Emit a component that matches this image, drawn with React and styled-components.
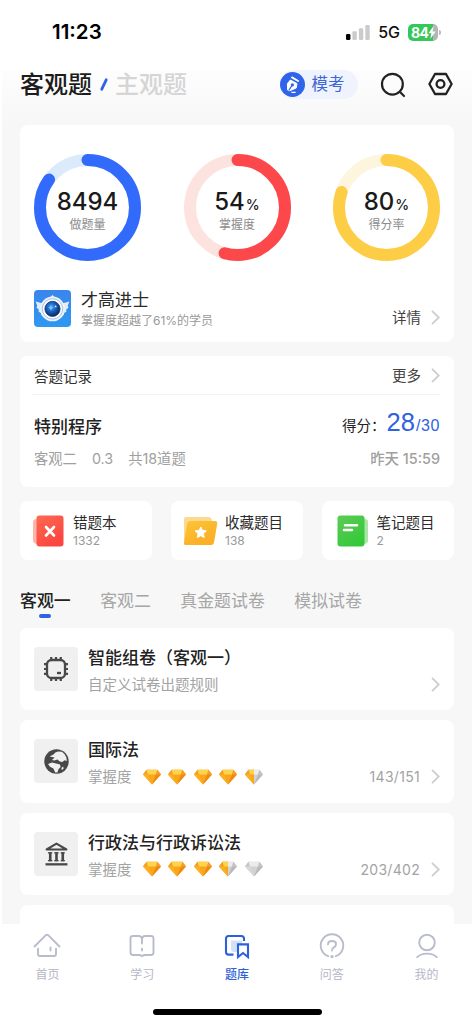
import React from "react";
import styled, { createGlobalStyle } from "styled-components";

const GlobalStyle = createGlobalStyle`
    * {
        box-sizing: border-box;
    }

    body {
        margin: 0;
        background: #fff;
        font-family: "Inter", "Noto Sans CJK SC", sans-serif;
        color: #222;
    }
`;

const Page = styled.div`
    width: 474px;
    height: 1025px;
    display: flex;
    flex-direction: column;
    overflow: hidden;
    background: #fff;
`;

const StatusBar = styled.div`
    height: 70px;
    flex-shrink: 0;
    display: flex;
    justify-content: space-between;
    align-items: flex-start;
    padding: 20px 33px 0 52px;
`;

const Clock = styled.span`
    font-size: 20.5px;
    line-height: 24px;
    font-weight: 600;
    color: #000;
`;

const StatusIcons = styled.div`
    height: 24px;
    display: flex;
    align-items: center;
`;

const Network = styled.span`
    font-size: 16px;
    font-weight: 500;
    color: #111;
    margin: 0 8px 0 8px;
`;

const Battery = styled.span`
    width: 30px;
    height: 17px;
    display: flex;
    align-items: center;
    padding-left: 3px;
    border-radius: 5px;
    background: linear-gradient(90deg, #34c759 84%, #b5b5b5 84%);
    color: #fff;
    font-size: 14px;
    line-height: 17px;
    font-weight: 700;
    letter-spacing: -0.6px;
`;

const BatteryTip = styled.span`
    width: 2px;
    height: 5px;
    margin-left: 1px;
    border-radius: 0 2px 2px 0;
    background: #bbb;
`;

const Content = styled.div`
    flex: 1;
    min-height: 0;
    display: flex;
    flex-direction: column;
    margin: 0 2px;
    padding: 0 18px;
    overflow: hidden;
    background: linear-gradient(#fdfdfd, #f7f7f7 56px);
`;

const Header = styled.div`
    height: 55px;
    flex-shrink: 0;
    display: flex;
    align-items: flex-start;
    justify-content: space-between;
    padding-right: 1.5px;
`;

const Titles = styled.div`
    height: 28px;
    display: flex;
    align-items: center;
`;

const Title = styled.span`
    padding-top: 2px;
    font-size: 24px;
    line-height: 28px;
    font-weight: 500;
    color: ${({ muted }) => (muted ? "#d5d5d5" : "#1c1c1c")};
`;

const Slash = styled.svg`
    margin: 0 7px 0 8px;
`;

const Actions = styled.div`
    height: 28px;
    display: flex;
    align-items: center;
`;

const MockButton = styled.div`
    width: 78px;
    height: 29px;
    display: flex;
    align-items: center;
    gap: 7px;
    margin-right: 22px;
    border-radius: 15px;
    background: #eff3fe;
    color: #3d66d4;
    font-size: 16.5px;
    line-height: 28px;
`;

const SearchIcon = styled.svg`
    margin: 2px 22px 0 0;
`;

const Card = styled.div`
    flex-shrink: 0;
    border-radius: 8px;
    background: #fff;
`;

const StatsCard = styled(Card)`
    height: 217px;
    padding: 29px 14px 0;
    margin-bottom: 14px;
`;

const Rings = styled.div`
    display: flex;
    justify-content: space-between;
    margin-bottom: 29px;
`;

const Ring = styled.div`
    width: 107px;
    height: 107px;
    display: grid;

    > * {
        grid-area: 1 / 1;
    }
`;

const RingText = styled.div`
    display: flex;
    flex-direction: column;
    align-items: center;
    padding-top: 33px;
`;

const RingValue = styled.div`
    height: 28px;
    font-size: 24px;
    line-height: 29px;
    font-weight: 500;
    color: #1a1a1a;

    small {
        margin-left: 1px;
        font-size: 14px;
        line-height: 1;
    }
`;

const RingLabel = styled.div`
    padding-top: 1px;
    font-size: 12px;
    line-height: 18px;
    color: #8c8c8c;
`;

const UserRow = styled.div`
    height: 37px;
    display: flex;
    align-items: center;
`;

const UserText = styled.div`
    flex: 1;
    margin-left: 10px;
    padding-top: 4px;
`;

const UserName = styled.div`
    font-size: 17px;
    line-height: 20px;
    color: #2b2b2b;
`;

const UserNote = styled.div`
    font-size: 12px;
    line-height: 22px;
    color: #999;
`;

const Link = styled.div`
    display: flex;
    align-items: center;
    gap: 10px;
    padding-top: ${({ offset }) => offset || 0}px;
    font-size: 14.5px;
    line-height: 20px;
    color: #444;
`;

const LinkText = styled.span`
    padding-top: 1px;
`;

const RecordCard = styled(Card)`
    height: 131px;
    padding: 0 14px;
    margin-bottom: 14px;
`;

const RecordHeader = styled.div`
    height: 39px;
    display: flex;
    align-items: center;
    justify-content: space-between;
    margin-left: -2px;
    padding-left: 2px;
    border-bottom: 1px solid #f3f3f3;
    font-size: 14.5px;
    color: #333;
`;

const RecordRow = styled.div`
    display: flex;
    align-items: center;
    justify-content: space-between;
    height: ${({ height }) => height}px;
    margin-top: ${({ gap }) => gap}px;
`;

const RecordName = styled.span`
    padding-top: 2px;
    font-size: 17px;
    font-weight: 500;
    color: #222;
`;

const Score = styled.span`
    display: flex;
    align-items: baseline;
    padding-bottom: 4px;
    font-size: 14.5px;
    color: #222;

    b,
    i {
        font-family: "Liberation Sans", sans-serif;
        font-style: normal;
        font-weight: 400;
        color: #2f62e0;
    }

    b {
        margin-left: 1px;
        font-size: 25.5px;
    }

    i {
        margin-left: 1px;
        font-size: 16px;
        letter-spacing: 0.6px;
    }
`;

const RecordMeta = styled.span`
    display: flex;
    align-items: baseline;
    gap: 15px;
    padding-bottom: 1px;
    font-size: 14.3px;
    color: #a0a0a0;
`;

const RecordTime = styled.span`
    padding-bottom: 1px;
    font-size: 14.4px;
    font-weight: 500;
    color: #a0a0a0;
`;

const Tiles = styled.div`
    flex-shrink: 0;
    display: grid;
    grid-template-columns: repeat(3, 132px);
    justify-content: space-between;
    margin-bottom: 25px;
`;

const Tile = styled.div`
    height: 59px;
    display: flex;
    align-items: center;
    padding-left: ${({ inset }) => inset}px;
    border-radius: 8px;
    background: #fff;
`;

const TileText = styled.div`
    margin-left: ${({ gap }) => gap}px;
    font-size: 14.5px;
    line-height: 20px;
    color: #2b2b2b;

    small {
        display: block;
        font-size: 12px;
        line-height: 16px;
        color: #999;
    }
`;

const Tabs = styled.div`
    height: 43px;
    flex-shrink: 0;
    display: flex;
    gap: 29.5px;
`;

const Tab = styled.div`
    height: 33px;
    display: flex;
    flex-direction: column;
    align-items: center;
    font-size: 16.9px;
    line-height: 33px;
    font-weight: ${({ active }) => (active ? 500 : 400)};
    color: ${({ active }) => (active ? "#222" : "#a6a6a6")};

    &::after {
        content: "";
        width: 12px;
        height: 4px;
        margin-top: -4px;
        flex-shrink: 0;
        border-radius: 2px;
        background: ${({ active }) => (active ? "#2f62e6" : "transparent")};
    }
`;

const PaperCard = styled(Card)`
    height: 82.4px;
    display: flex;
    padding: 19px 14px 0;
    margin-bottom: 10px;
`;

const PaperIcon = styled.div`
    width: 44px;
    height: 44px;
    display: flex;
    align-items: center;
    justify-content: center;
    border-radius: 4px;
    background: #f0f0f0;
`;

const PaperBody = styled.div`
    flex: 1;
    margin-left: 10px;
`;

const PaperTitle = styled.div`
    height: 21px;
    font-size: 17px;
    line-height: 23px;
    font-weight: 500;
    color: #222;
`;

const PaperRow = styled.div`
    height: 25px;
    display: flex;
    align-items: center;
    margin-top: 4px;
    font-size: 14.5px;
    line-height: 25px;
    color: #a3a3a3;
`;

const Gems = styled.div`
    display: flex;
    gap: 7.5px;
    margin-left: 11px;
`;

const PaperCount = styled.div`
    display: flex;
    align-items: center;
    gap: 11px;
    margin-left: auto;
    font-size: 14px;
    letter-spacing: 0.3px;
`;

const TabBar = styled.div`
    height: 101px;
    flex-shrink: 0;
    display: flex;
    flex-direction: column;
    align-items: center;
    background: #fff;
`;

const NavItems = styled.div`
    width: 100%;
    height: 85px;
    display: flex;
`;

const NavItem = styled.div`
    flex: 1;
    display: flex;
    flex-direction: column;
    align-items: center;
    padding-top: 8px;
    font-size: 12px;
    line-height: 18px;
    font-weight: ${({ active }) => (active ? 500 : 400)};
    color: ${({ active }) => (active ? "#2f62d8" : "#b4b7c6")};

    svg {
        margin-bottom: 6px;
    }
`;

const HomeIndicator = styled.div`
    width: 169px;
    height: 6px;
    border-radius: 3px;
    background: #000;
`;

const rings = [
    { value: "8494", label: "做题量", percent: 85, color: "#326bfb", track: "#dcebfb" },
    { value: "54", unit: "%", label: "掌握度", percent: 54.4, color: "#fc484b", track: "#fde3e0" },
    { value: "80", unit: "%", label: "得分率", percent: 80.3, color: "#fccd45", track: "#fef5df" },
];

const navs = [
    { name: "首页", Icon: HomeIcon },
    { name: "学习", Icon: BookIcon },
    { name: "题库", Icon: BankIcon, active: true },
    { name: "问答", Icon: AskIcon },
    { name: "我的", Icon: MineIcon },
];

function Chevron() {
    return (
        <svg width="9" height="15" viewBox="0 0 9 15" fill="none" stroke="#cdcdcd" strokeWidth="1.8">
            <path d="M1 0.8L7.8 7.5L1 14.2" />
        </svg>
    );
}

function SignalIcon() {
    return (
        <svg width="24" height="15" viewBox="0 0 24 15" fill="#cbcbcb">
            <rect x="0" y="9" width="4.4" height="6" rx="1.3" fill="#000" />
            <rect x="6.4" y="6.2" width="4.4" height="8.8" rx="1.3" />
            <rect x="12.9" y="3.2" width="4.4" height="11.8" rx="1.3" />
            <rect x="19.3" y="0" width="4.4" height="15" rx="1.3" />
        </svg>
    );
}

function PenIcon() {
    return (
        <svg width="25" height="25" viewBox="0 0 25 25">
            <circle cx="12.5" cy="12.5" r="12.5" fill="#2f63ea" />
            <path d="M10.4 8L17 11.6L16.2 16L9.6 18.8L7.6 18L7.4 11.6Z" fill="#fff" stroke="#fff" strokeLinejoin="round" />
            <path d="M12 5.4L18.2 9" stroke="#fff" strokeWidth="1.8" strokeLinecap="round" />
            <path d="M8.8 18.4L12 13.4" stroke="#2f63ea" strokeWidth="1.1" />
            <circle cx="12.4" cy="12.8" r="1.6" fill="#2f63ea" />
            <path d="M11.4 20.4H15.6" stroke="#fff" strokeWidth="1.3" />
        </svg>
    );
}

function Avatar() {
    return (
        <svg width="37" height="37" viewBox="0 0 37 37">
            <defs>
                <linearGradient id="avatarBg" x1="0" y1="0" x2="0" y2="1">
                    <stop offset="0" stopColor="#3b84ec" />
                    <stop offset="1" stopColor="#2d99f2" />
                </linearGradient>
                <radialGradient id="lens" cx="0.42" cy="0.38" r="0.6">
                    <stop offset="0" stopColor="#48a4f4" />
                    <stop offset="0.55" stopColor="#155bb8" />
                    <stop offset="1" stopColor="#0c2d64" />
                </radialGradient>
            </defs>
            <rect width="37" height="37" rx="4" fill="url(#avatarBg)" />
            <path
                d="M1.6 11.5L11 14L10 26L7.6 25.2L7 23L4.6 21.8L4.8 19.6L2.6 17.8L3.2 15.6Z"
                fill="#e3edf8"
            />
            <path
                d="M35.4 11.5L26 14L27 26L29.4 25.2L30 23L32.4 21.8L32.2 19.6L34.4 17.8L33.8 15.6Z"
                fill="#e3edf8"
            />
            <path d="M16 7.5L18.5 5L21 7.5Z" fill="#e9f2fb" />
            <circle cx="18.5" cy="18.9" r="12.4" fill="#eaf2fb" />
            <circle cx="18.5" cy="18.9" r="10.2" fill="#fff" stroke="#8fb3dc" strokeWidth="0.8" />
            <circle cx="18.5" cy="18.9" r="7.6" fill="url(#lens)" stroke="#17386e" strokeWidth="0.8" />
            <path d="M16.8 15L17.8 17L19.8 17.6L18 18.6L17 20.6L16 18.6L14.2 17.6L16 17Z" fill="#7cc5fb" />
            <circle cx="21.6" cy="16.4" r="0.9" fill="#d9eefe" />
        </svg>
    );
}

function WrongIcon() {
    return (
        <svg width="32" height="32" viewBox="0 0 32 32">
            <defs>
                <linearGradient id="wrong" x1="0" y1="0" x2="0.6" y2="1">
                    <stop offset="0" stopColor="#fd6a50" />
                    <stop offset="1" stopColor="#fb4540" />
                </linearGradient>
            </defs>
            <path d="M7 3L2.5 4.6Q1 5.2 1 7V26Q1 27.6 2.6 28.2L7 30Z" fill="#fdb5a9" />
            <rect x="4.5" y="0.5" width="27" height="31" rx="3" fill="url(#wrong)" />
            <path d="M14 12L22 20.5M22 12L14 20.5" stroke="#fff" strokeWidth="2.6" strokeLinecap="round" />
        </svg>
    );
}

function FavoriteIcon() {
    return (
        <svg width="35" height="30" viewBox="0 0 35 30">
            <defs>
                <linearGradient id="favorite" x1="0" y1="0" x2="0.6" y2="1">
                    <stop offset="0" stopColor="#fcc536" />
                    <stop offset="1" stopColor="#fbae26" />
                </linearGradient>
            </defs>
            <path d="M3 1H25.5Q28.4 1 28.6 4V24H1V3Q1 1 3 1Z" fill="#fdd990" />
            <path
                d="M7 5H32Q34.8 5 34.2 8L31 26.4Q30.5 29 28 29H3Q0.6 29 1 26.4L4 7.5Q4.4 5 7 5Z"
                fill="url(#favorite)"
            />
            <path
                d="M17.8 11L19.5 14.4L23.3 14.9L20.5 17.6L21.2 21.5L17.8 19.7L14.3 21.5L15 17.6L12.2 14.9L16 14.4Z"
                fill="#fff"
                stroke="#fff"
                strokeLinejoin="round"
            />
        </svg>
    );
}

function NoteIcon() {
    return (
        <svg width="32" height="32" viewBox="0 0 32 32">
            <defs>
                <linearGradient id="note" x1="0" y1="0" x2="0.6" y2="1">
                    <stop offset="0" stopColor="#5ccb56" />
                    <stop offset="1" stopColor="#35c93a" />
                </linearGradient>
            </defs>
            <path d="M25 3L29.6 4.4Q31 5 31 6.6V26Q31 27.6 29.6 28.2L25 30Z" fill="#a8e5a6" />
            <rect x="0.5" y="0.5" width="27" height="31" rx="3" fill="url(#note)" />
            <path d="M8 10.2H20M7 15H15" stroke="#fff" strokeWidth="2.5" strokeLinecap="round" />
        </svg>
    );
}

function ChipIcon() {
    return (
        <svg width="26" height="26" viewBox="0 0 26 26" fill="none" stroke="#484848" strokeWidth="2.3">
            <rect x="4" y="4" width="18" height="18" rx="4.5" />
            <path
                d="M8.2 1V4M13 1V4M17.8 1V4M8.2 22V25M13 22V25M17.8 22V25M1 8.2H4M1 13H4M1 17.8H4M22 8.2H25M22 13H25M22 17.8H25"
                strokeWidth="2.2"
            />
            <path d="M14 17H18" strokeWidth="2.4" />
        </svg>
    );
}

function EarthIcon() {
    return (
        <svg width="25" height="25" viewBox="0 0 25 25">
            <circle cx="12.5" cy="12.5" r="12.2" fill="#484848" />
            <path
                d="M5.6 7.4L9.4 5.6L11.4 3.4L14 2.4L18 2.8L20.6 5.2L22.4 8.6L22.8 12L20.4 11.2L18.4 13L15.8 12.4L13.4 10.4L10.2 11.4L8 11L10.6 8.4Z"
                fill="#f0f0f0"
            />
            <path
                d="M4 15L8 13.4L12 14.4L16 15.4L16.6 18L14.6 20L13.4 23.6H11.2L9.4 19.4L6 17.8Z"
                fill="#f0f0f0"
            />
            <path d="M17.4 19L19.2 17.6L19.6 19.8L17.8 21Z" fill="#f0f0f0" />
        </svg>
    );
}

function CourtIcon() {
    return (
        <svg width="23" height="24" viewBox="0 0 22 23" fill="none" stroke="#484848">
            <path d="M1.5 7.2L11 1.6L20.5 7.2Z" strokeWidth="2" strokeLinejoin="round" />
            <path d="M5 9.8V18.4M11 9.8V18.4M17 9.8V18.4" strokeWidth="2.5" />
            <path d="M2.8 10.4H7M8.8 10.4H13M15 10.4H19M2.8 17.9H7M8.8 17.9H13M15 17.9H19" strokeWidth="1.2" />
            <path d="M0.5 21.4H21.5" strokeWidth="2.2" />
        </svg>
    );
}

// fill: 1 is a full gem, 0.5 a half one, 0 an empty one
function Gem({ fill }) {
    const shape = (c) => (
        <>
            <path d="M3.6 0.8H14.4L18 5.6L9 15.6L0 5.6Z" fill={c[0]} />
            <path d="M3.6 0.8L5 5.6H0Z" fill={c[1]} />
            <path d="M3.6 0.8H14.4L13 5.6H5Z" fill={c[2]} />
            <path d="M14.4 0.8L18 5.6H13Z" fill={c[1]} />
            <path d="M0 5.6H5L9 15.6Z" fill={c[3]} />
            <path d="M18 5.6H13L9 15.6Z" fill={c[4]} />
        </>
    );
    const gold = ["#fba51c", "#f3a02a", "#fdd44c", "#fcb121", "#ee8a12"];
    const gray = ["#d2d2d2", "#c4c4c4", "#ebebeb", "#d9d9d9", "#b9b9b9"];
    return (
        <svg width="18" height="16" viewBox="0 0 18 16">
            {shape(fill === 1 ? gold : gray)}
            {fill === 0.5 && (
                <svg width="9" height="16" viewBox="0 0 9 16">
                    {shape(gold)}
                </svg>
            )}
        </svg>
    );
}

function HomeIcon() {
    return (
        <svg width="28" height="28" viewBox="0 0 28 28" fill="none" stroke="#b9bccb" strokeWidth="1.9" strokeLinecap="round">
            <path d="M1.5 14.5L12.8 3.2Q14 2.2 15.2 3.2L26.5 14.5" />
            <path d="M5 16.6V22Q5 24 7 24H21Q23 24 23 22V16.6M17.5 15.5V18.6" />
        </svg>
    );
}

function BookIcon() {
    return (
        <svg width="28" height="28" viewBox="0 0 28 28" fill="none" stroke="#b9bccb" strokeWidth="1.9" strokeLinecap="round">
            <path d="M14 11.5V7.5Q14 4 10.6 4H5Q2.5 4 2.5 6.4V20.6Q2.5 23 5 23H11.5L14 24L16.5 23H23Q25.5 23 25.5 20.6V6.4Q25.5 4 23 4H17.4Q14 4 14 7.5" />
            <path d="M14 16.8V18.5" />
        </svg>
    );
}

function BankIcon() {
    return (
        <svg width="28" height="28" viewBox="0 0 28 28" fill="none" stroke="#2c60dc" strokeWidth="2.1">
            <path d="M8 8.5H19V20H11Q8 20 8 17Z" fill="#d3e1fb" stroke="none" />
            <path d="M21 9V6.6Q21 4 18.4 4H5.6Q3 4 3 6.6V20Q3 22.6 5.6 22.6H10.5" />
            <path d="M15 12.4H25V25L20 21L15 25Z" fill="#fff" />
        </svg>
    );
}

function AskIcon() {
    return (
        <svg width="28" height="28" viewBox="0 0 28 28" fill="none" stroke="#b9bccb" strokeWidth="1.9" strokeLinecap="round">
            <path d="M10.2 24.2A11.3 11.3 0 1 1 17.8 24.2" />
            <path d="M10 12.2Q10.2 9 14 9Q18 9 18 12.2Q18 14.3 15.8 15.4Q14 16.4 14 18.6" />
            <circle cx="14" cy="24.6" r="1.6" fill="#b9bccb" stroke="none" />
        </svg>
    );
}

function MineIcon() {
    return (
        <svg width="28" height="28" viewBox="0 0 28 28" fill="none" stroke="#b9bccb" strokeWidth="1.9" strokeLinecap="round">
            <circle cx="14" cy="10.5" r="7.8" />
            <path d="M4.2 25.2Q7.8 21.6 14 21.6Q20.2 21.6 23.8 25.2" />
        </svg>
    );
}

const papers = [
    { title: "智能组卷（客观一）", note: "自定义试卷出题规则", Icon: ChipIcon },
    { title: "国际法", note: "掌握度", Icon: EarthIcon, gems: [1, 1, 1, 1, 0.5], count: "143/151" },
    { title: "行政法与行政诉讼法", note: "掌握度", Icon: CourtIcon, gems: [1, 1, 1, 0.5, 0], count: "203/402" },
];

function App() {
    return (
        <Page>
            <GlobalStyle />
            <StatusBar>
                <Clock>11:23</Clock>
                <StatusIcons>
                    <SignalIcon />
                    <Network>5G</Network>
                    <Battery>
                        84
                        <svg width="8" height="13" viewBox="0 0 8 13" fill="#fff">
                            <path d="M5.6 0L0.4 7.2H3.4L2.2 13L7.8 5.4H4.6Z" />
                        </svg>
                    </Battery>
                    <BatteryTip />
                </StatusIcons>
            </StatusBar>
            <Content>
                <Header>
                    <Titles>
                        <Title>客观题</Title>
                        <Slash width="8" height="13" viewBox="0 0 8 13">
                            <path d="M1.8 11.2L6.2 1.8" stroke="#2f62e6" strokeWidth="2.8" strokeLinecap="round" />
                        </Slash>
                        <Title muted>主观题</Title>
                    </Titles>
                    <Actions>
                        <MockButton>
                            <PenIcon />
                            模考
                        </MockButton>
                        <SearchIcon width="26" height="26" viewBox="0 0 26 26" fill="none" stroke="#222" strokeWidth="2.2" strokeLinecap="round">
                            <circle cx="12.4" cy="12.2" r="10.4" />
                            <path d="M20 20L24 24" />
                        </SearchIcon>
                        <svg width="25" height="24" viewBox="0 0 25 24" fill="none" stroke="#222" strokeWidth="2.3" strokeLinejoin="round">
                            <path d="M7 2H18L23.6 12L18 22H7L1.4 12Z" />
                            <circle cx="12.5" cy="12" r="3.9" />
                        </svg>
                    </Actions>
                </Header>

                <StatsCard>
                    <Rings>
                        {rings.map((ring) => (
                            <Ring key={ring.label}>
                                <svg width="107" height="107" viewBox="0 0 107 107" fill="none" strokeWidth="12">
                                    <circle cx="53.5" cy="53.5" r="47.5" stroke={ring.track} />
                                    <circle
                                        cx="53.5"
                                        cy="53.5"
                                        r="47.5"
                                        stroke={ring.color}
                                        strokeLinecap="round"
                                        pathLength="100"
                                        strokeDasharray={`${ring.percent} 100`}
                                        transform="rotate(-90 53.5 53.5)"
                                    />
                                </svg>
                                <RingText>
                                    <RingValue>
                                        {ring.value}
                                        {ring.unit && <small>{ring.unit}</small>}
                                    </RingValue>
                                    <RingLabel>{ring.label}</RingLabel>
                                </RingText>
                            </Ring>
                        ))}
                    </Rings>
                    <UserRow>
                        <Avatar />
                        <UserText>
                            <UserName>才高进士</UserName>
                            <UserNote>掌握度超越了61%的学员</UserNote>
                        </UserText>
                        <Link offset={17}>
                            <LinkText>详情</LinkText>
                            <Chevron />
                        </Link>
                    </UserRow>
                </StatsCard>

                <RecordCard>
                    <RecordHeader>
                        答题记录
                        <Link>
                            <LinkText>更多</LinkText>
                            <Chevron />
                        </Link>
                    </RecordHeader>
                    <RecordRow height={30} gap={14}>
                        <RecordName>特别程序</RecordName>
                        <Score>
                            得分：<b>28</b>
                            <i>/30</i>
                        </Score>
                    </RecordRow>
                    <RecordRow height={24} gap={7}>
                        <RecordMeta>
                            <span>客观二</span>
                            <span>0.3</span>
                            <span>共18道题</span>
                        </RecordMeta>
                        <RecordTime>昨天 15:59</RecordTime>
                    </RecordRow>
                </RecordCard>

                <Tiles>
                    <Tile inset={12}>
                        <WrongIcon />
                        <TileText gap={9}>
                            错题本
                            <small>1332</small>
                        </TileText>
                    </Tile>
                    <Tile inset={12}>
                        <FavoriteIcon />
                        <TileText gap={7}>
                            收藏题目
                            <small>138</small>
                        </TileText>
                    </Tile>
                    <Tile inset={14.5}>
                        <NoteIcon />
                        <TileText gap={8}>
                            笔记题目
                            <small>2</small>
                        </TileText>
                    </Tile>
                </Tiles>

                <Tabs>
                    <Tab active>客观一</Tab>
                    <Tab>客观二</Tab>
                    <Tab>真金题试卷</Tab>
                    <Tab>模拟试卷</Tab>
                </Tabs>

                {papers.map(({ title, note, Icon, gems, count }) => (
                    <PaperCard key={title}>
                        <PaperIcon>
                            <Icon />
                        </PaperIcon>
                        <PaperBody>
                            <PaperTitle>{title}</PaperTitle>
                            <PaperRow>
                                {note}
                                {gems && (
                                    <Gems>
                                        {gems.map((fill, i) => (
                                            <Gem key={i} fill={fill} />
                                        ))}
                                    </Gems>
                                )}
                                <PaperCount>
                                    {count}
                                    <Chevron />
                                </PaperCount>
                            </PaperRow>
                        </PaperBody>
                    </PaperCard>
                ))}
                <PaperCard />
            </Content>
            <TabBar>
                <NavItems>
                    {navs.map(({ name, Icon, active }) => (
                        <NavItem key={name} active={active}>
                            <Icon />
                            {name}
                        </NavItem>
                    ))}
                </NavItems>
                <HomeIndicator />
            </TabBar>
        </Page>
    );
}

export default App;
